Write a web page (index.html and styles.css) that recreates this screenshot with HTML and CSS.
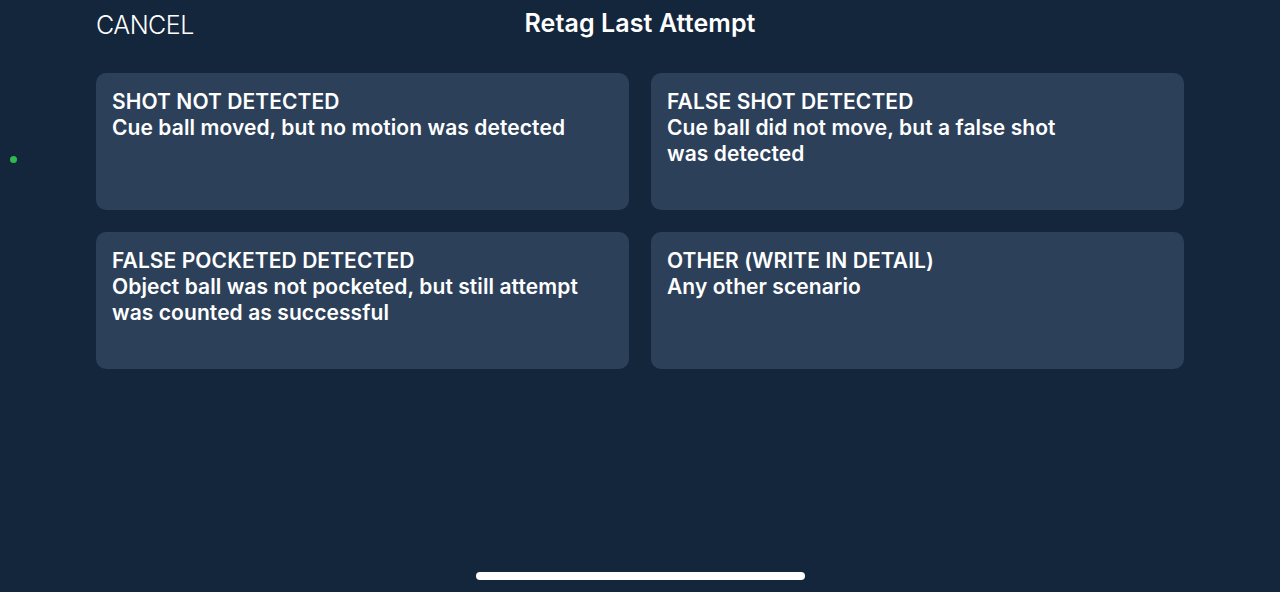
FILE: index.html
```html
<!DOCTYPE html>
<html>
<head>
<meta charset="utf-8">
<link rel="stylesheet" href="styles.css">
</head>
<body>
<div class="screen">
  <header class="topbar">
    <span class="cancel">CANCEL</span>
    <h1 class="title">Retag Last Attempt</h1>
  </header>
  <main class="grid">
    <div class="card">
      <div class="card-title">SHOT NOT DETECTED</div>
      <div class="card-desc">Cue ball moved, but no motion was detected</div>
    </div>
    <div class="card">
      <div class="card-title">FALSE SHOT DETECTED</div>
      <div class="card-desc">Cue ball did not move, but a false shot<br>was detected</div>
    </div>
    <div class="card">
      <div class="card-title">FALSE POCKETED DETECTED</div>
      <div class="card-desc">Object ball was not pocketed, but still attempt<br>was counted as successful</div>
    </div>
    <div class="card">
      <div class="card-title">OTHER (WRITE IN DETAIL)</div>
      <div class="card-desc">Any other scenario</div>
    </div>
  </main>
  <div class="dot"></div>
  <div class="home-indicator"></div>
</div>
</body>
</html>
```
FILE: styles.css
```css
html, body {
  margin: 0;
  padding: 0;
  background: #13263c;
}
.screen {
  position: relative;
  width: 1280px;
  height: 592px;
  overflow: hidden;
  background: #13263c;
  color: #fff;
  font-family: Inter, "Noto Sans", sans-serif;
}
.topbar {
  position: relative;
  height: 50px;
  padding: 0 96px;
  display: flex;
  align-items: center;
}
.cancel {
  font-size: 25px;
  font-weight: 300;
  letter-spacing: -0.5px;
}
.title {
  position: absolute;
  left: 0;
  right: 0;
  top: 0;
  height: 46px;
  margin: 0;
  display: flex;
  align-items: center;
  justify-content: center;
  font-size: 25px;
  font-weight: 600;
  letter-spacing: 0.1px;
  pointer-events: none;
}
.grid {
  display: grid;
  grid-template-columns: 533px 533px;
  grid-auto-rows: 137px;
  gap: 22px;
  padding: 23px 96px 0;
}
.card {
  background: #2c405a;
  border-radius: 10px;
  padding: 16px 16px;
  font-size: 21px;
  font-weight: 560;
  letter-spacing: 0.08px;
  line-height: 26px;
}
.dot {
  position: absolute;
  left: 10px;
  top: 156px;
  width: 7px;
  height: 7px;
  border-radius: 50%;
  background: #2dbb4e;
}
.home-indicator {
  position: absolute;
  left: 476px;
  top: 572px;
  width: 329px;
  height: 8px;
  border-radius: 4px;
  background: #fff;
}
```
